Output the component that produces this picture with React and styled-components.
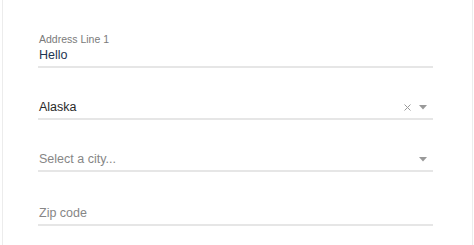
import React from "react";
import styled, { createGlobalStyle } from "styled-components";

const Global = createGlobalStyle`
  html, body { margin: 0; padding: 0; background: #fff; }
  body { font-family: "Liberation Sans", Arial, sans-serif; }
`;

const Card = styled.div`
  box-sizing: border-box;
  margin-left: 2px;
  width: 471px;
  height: 245px;
  border-left: 1px solid #ececec;
  border-right: 1px solid #ececec;
  padding: 32px 39px 0 35px;
  display: flex;
  flex-direction: column;
`;

const Field = styled.div`
  margin-top: ${(p) => p.$gap || 0}px;
  border-bottom: 2px solid #e6e6e6;
  display: flex;
  flex-direction: column;
`;

const Label = styled.label`
  font-size: 10.5px;
  line-height: 14px;
  color: #7a7a7a;
  padding-left: 1px;
`;

const Row = styled.div`
  height: 18px;
  padding: 0 6px 2px 1px;
  display: flex;
  align-items: center;
`;

const Value = styled.span`
  flex: 1;
  font-size: 12.5px;
  color: ${(p) => (p.$placeholder ? "#868686" : p.$color || "#2a2a2a")};
`;

const Icons = styled.div`
  display: flex;
  align-items: center;
  gap: 8px;
`;

const Clear = () => (
  <svg width="7" height="7" viewBox="0 0 7 7">
    <path d="M0.5 0.5 L6.5 6.5 M6.5 0.5 L0.5 6.5" stroke="#9a9a9a" strokeWidth="1" />
  </svg>
);

const Arrow = () => (
  <svg width="8" height="5" viewBox="0 0 8 5">
    <path d="M0 0 H8 L4 4.5 Z" fill="#999" />
  </svg>
);

export default function App() {
  return (
    <>
      <Global />
      <Card>
        <Field>
          <Label>Address Line 1</Label>
          <Row>
            <Value $color="#1d3552">Hello</Value>
          </Row>
        </Field>
        <Field $gap={30}>
          <Row>
            <Value>Alaska</Value>
            <Icons>
              <Clear />
              <Arrow />
            </Icons>
          </Row>
        </Field>
        <Field $gap={30}>
          <Row>
            <Value $placeholder>Select a city...</Value>
            <Icons>
              <Arrow />
            </Icons>
          </Row>
        </Field>
        <Field $gap={32}>
          <Row>
            <Value $placeholder>Zip code</Value>
          </Row>
        </Field>
      </Card>
    </>
  );
}
